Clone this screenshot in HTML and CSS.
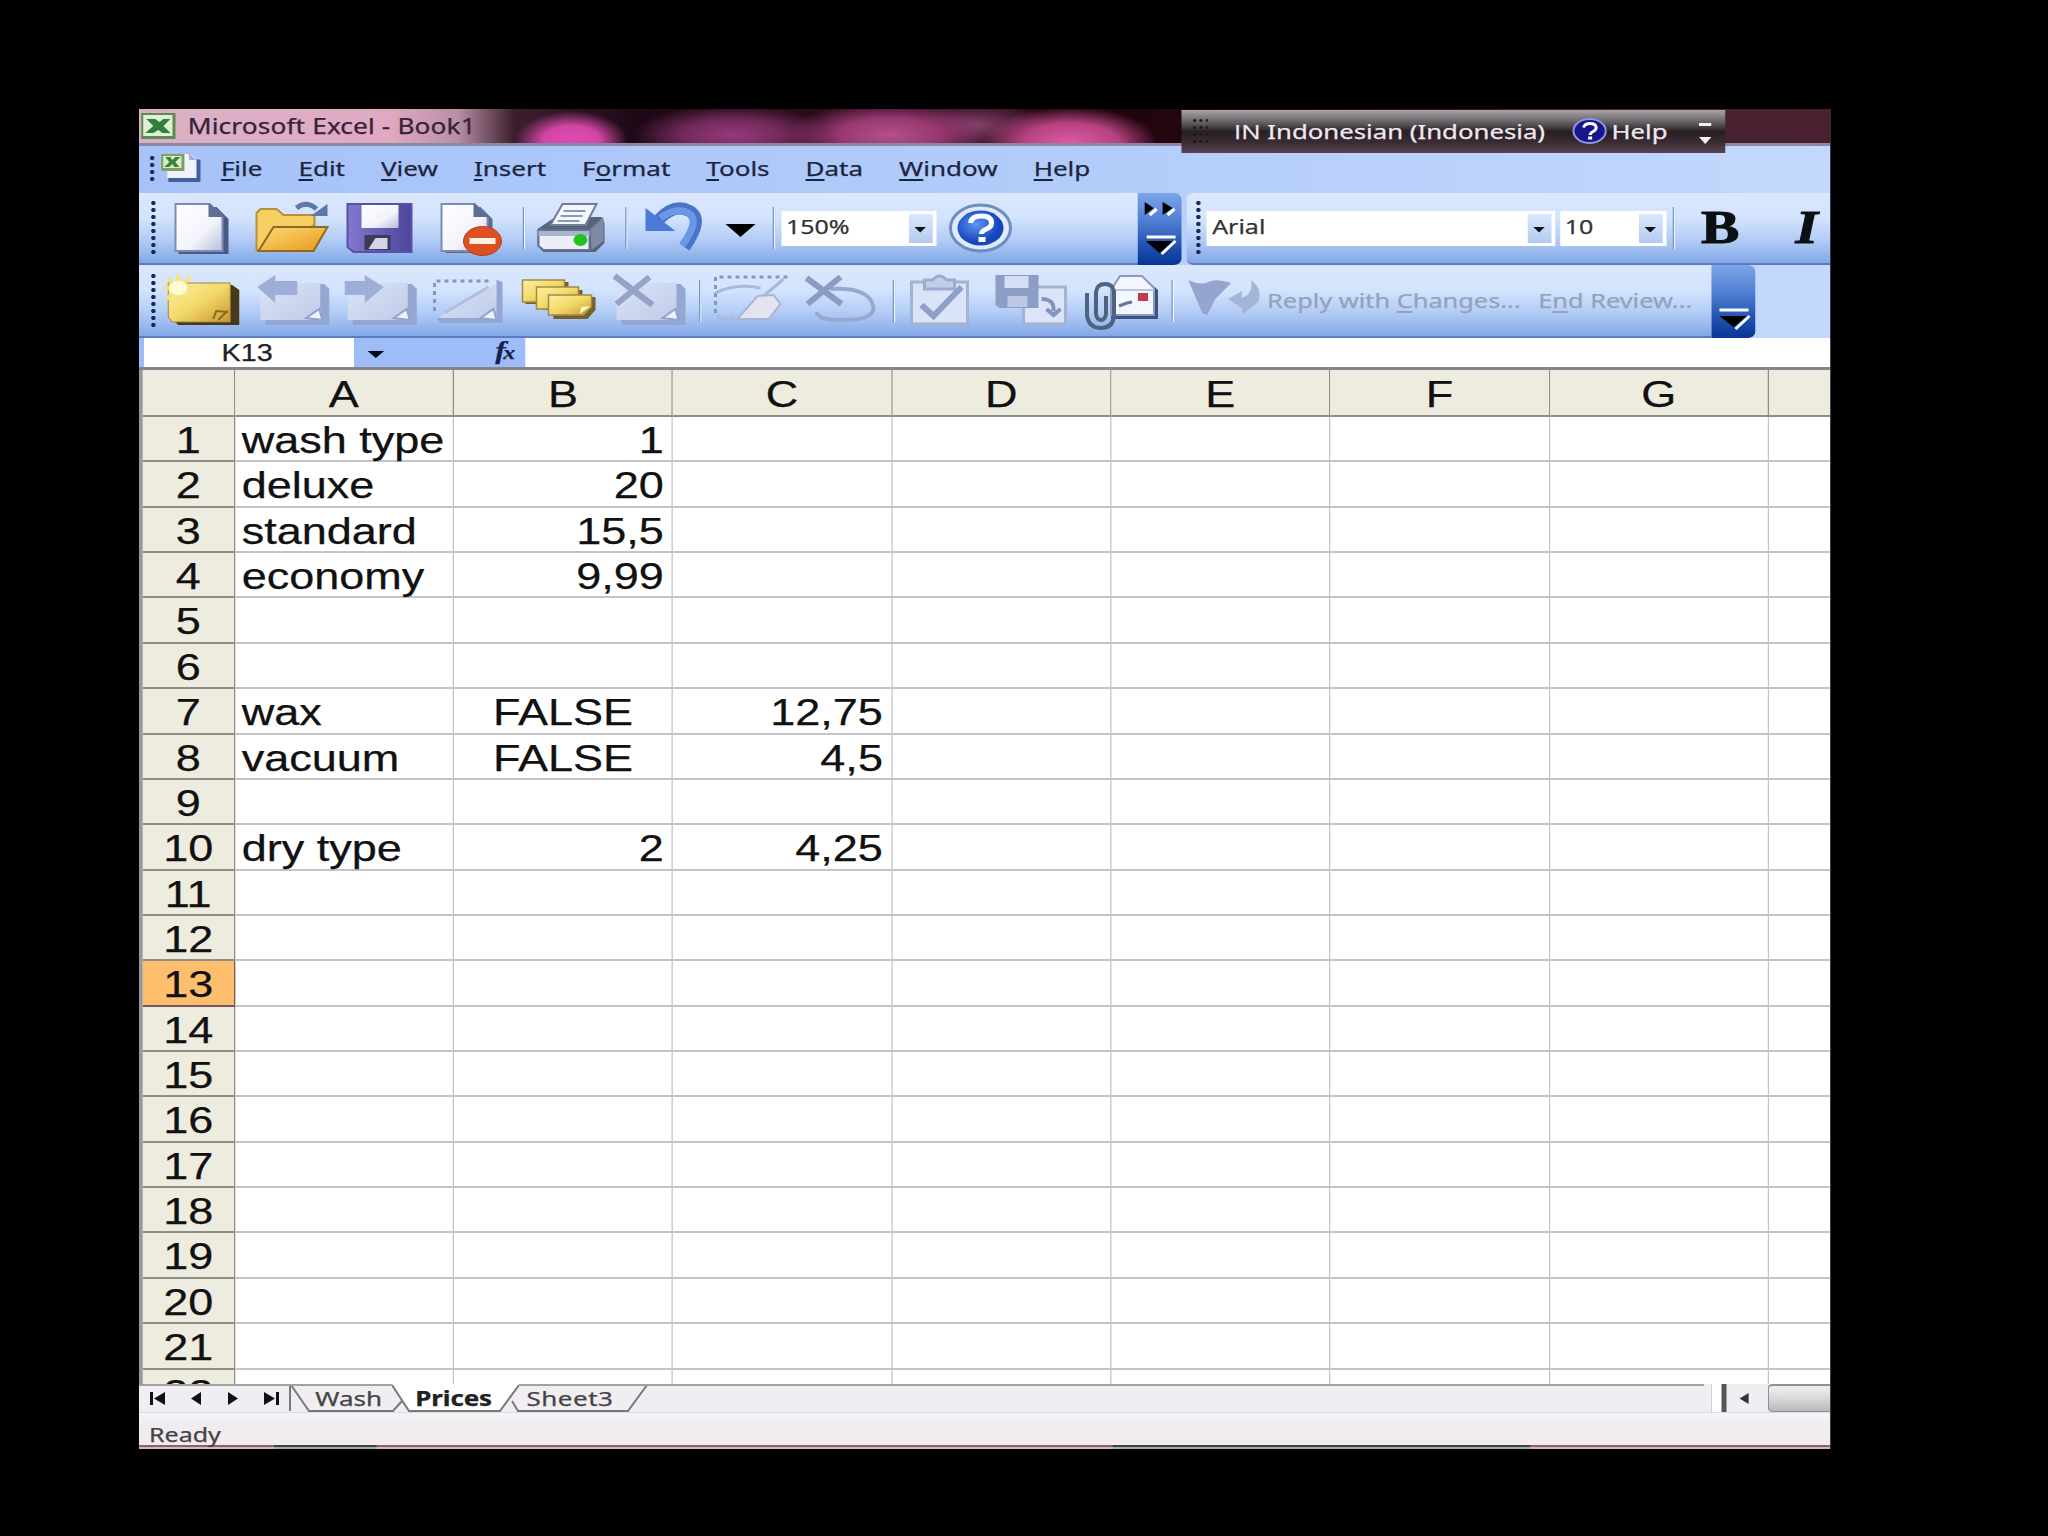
FILE: index.html
```
<!DOCTYPE html>
<html lang="en">
<head>
    <meta charset="UTF-8">
    <title>Microsoft Excel - Book1</title>
    <link rel="stylesheet" href="styles.css">
</head>
<body>
    <svg width="0" height="0" class="defs">
        <defs>
            <linearGradient id="paper" x1="0" y1="0" x2="1" y2="1">
                <stop offset="0" stop-color="#fff"/><stop offset=".6" stop-color="#f3f4fc"/><stop offset="1" stop-color="#b4bedc"/>
            </linearGradient>
            <linearGradient id="gold" x1="0" y1="0" x2="1" y2="1">
                <stop offset="0" stop-color="#fdf0a0"/><stop offset=".5" stop-color="#f3d96a"/><stop offset="1" stop-color="#c9962c"/>
            </linearGradient>
            <linearGradient id="orange" x1="0" y1="0" x2="1" y2="1">
                <stop offset="0" stop-color="#ffd978"/><stop offset="1" stop-color="#e69a1c"/>
            </linearGradient>
            <linearGradient id="faded" x1="0" y1="0" x2="1" y2="1">
                <stop offset="0" stop-color="#dbe3f6"/><stop offset="1" stop-color="#bfcbe8"/>
            </linearGradient>
            <linearGradient id="disk" x1="0" y1="0" x2="1" y2="0">
                <stop offset="0" stop-color="#8279cf"/><stop offset="1" stop-color="#4d459c"/>
            </linearGradient>
            <radialGradient id="ball" cx=".4" cy=".4">
                <stop offset="0" stop-color="#5c96f2"/><stop offset="1" stop-color="#1546bd"/>
            </radialGradient>
        </defs>
    </svg>
    <div class="window">
        <div class="titlebar">
            <svg class="app-icon" width="29" height="28" viewBox="0 0 36 28" preserveAspectRatio="none">
                <rect x="1" y="1" width="34" height="26" fill="#5f8a55"/>
                <rect x="3" y="3" width="29" height="21" fill="#dff0d6"/>
                <path d="M6 7h9l4 3 4-3h7l-7 7 7 7h-8l-4-3-5 3H5l8-7z" fill="#2f7f3d"/>
            </svg>
            <span>Microsoft Excel - Book1</span>
        </div>
        <div class="langbar">
            <div class="lang-grip"></div>
            <span class="lang-name"><b>IN</b> Indonesian (Indonesia)</span>
            <svg width="29" height="26" viewBox="0 0 36 26" preserveAspectRatio="none">
                <ellipse cx="18" cy="13" rx="16" ry="12" fill="#15158c" stroke="#8f97e0" stroke-width="2"/>
                <path d="M12 9.500q1-4 6.500-4t6 4q0 2.500-3 4t-3 3.500" fill="none" stroke="#fff" stroke-width="3"/>
                <rect x="16.500" y="18.500" width="4" height="3" fill="#fff"/>
            </svg>
            <span class="lang-help">Help</span>
            <svg class="lang-more" width="10" height="24" viewBox="0 0 12 24" preserveAspectRatio="none">
                <path d="M0 2h12v3H0zM0 16h12l-6 7z" fill="#f4f0f4"/>
            </svg>
        </div>
        <div class="menubar">
            <div class="grip menu-grip"></div>
            <svg class="book-icon" width="33" height="32" viewBox="0 0 41 32" preserveAspectRatio="none">
                <path d="M8 6h24l8 2v22H8z" fill="#44609c"/>
                <path d="M7 2h23l6 5v19H7z" fill="#eef2ff"/>
                <path d="M28 1l8 7h-7z" fill="#9fb0d4"/>
                <rect x="1" y="2" width="23" height="17" fill="#7fa05e"/>
                <rect x="3" y="4" width="18" height="12" fill="#dcecc8"/>
                <path d="M5 5h5l2 3 3-3h5l-5 5 4 5h-5l-2-3-3 3H4l5-5z" fill="#39863d"/>
            </svg>
            <nav>
                <span><u>F</u>ile</span>
                <span><u>E</u>dit</span>
                <span><u>V</u>iew</span>
                <span><u>I</u>nsert</span>
                <span>F<u>o</u>rmat</span>
                <span><u>T</u>ools</span>
                <span><u>D</u>ata</span>
                <span><u>W</u>indow</span>
                <span><u>H</u>elp</span>
            </nav>
        </div>

        <div class="bars">
            <div class="toolbar standard">
                <div class="grip"></div>
                <!-- new -->
                <svg width="64" height="71" viewBox="0 0 80 71" preserveAspectRatio="none">
                    <path d="M12 14h38l12 12v35H12z" fill="#4a5a86"/>
                    <path d="M9 11h34l13 12v35H9z" fill="url(#paper)" stroke="#7d8bb2" stroke-width="2"/>
                    <path d="M42 10v14h17z" fill="#5e6f96"/>
                </svg>
                <!-- open -->
                <svg width="76" height="71" viewBox="0 0 95 71" preserveAspectRatio="none">
                    <path d="M10 57V20l4-4h16l7 6h31v10L22 57z" fill="#f6cf62" stroke="#b3913f" stroke-width="2"/>
                    <path d="M12 58L27 34h54L67 58z" fill="url(#orange)" stroke="#8d6a22" stroke-width="2"/>
                    <path d="M50 15q10-8 20 1" fill="none" stroke="#5d79a6" stroke-width="5"/>
                    <path d="M64 23h17V11z" fill="#5d79a6"/>
                </svg>
                <!-- save -->
                <svg width="72" height="71" viewBox="0 0 90 71" preserveAspectRatio="none">
                    <path d="M6 11h64v48H12l-6-5z" fill="url(#disk)" stroke="#5950ab" stroke-width="2"/>
                    <rect x="20" y="12" width="37" height="23" fill="url(#paper)"/>
                    <rect x="23" y="42" width="26" height="15" fill="#3c3a55"/>
                    <path d="M34 45h12v11H27z" fill="#d5d4e4"/>
                </svg>
                <!-- permission -->
                <svg width="68" height="71" viewBox="0 0 85 71" preserveAspectRatio="none">
                    <path d="M14 14h35l12 12v34H14z" fill="#5c6c90"/>
                    <path d="M10 11h33l13 12v35H10z" fill="url(#paper)" stroke="#7d8bb2" stroke-width="2"/>
                    <path d="M42 10v14h17z" fill="#5e6f96"/>
                    <ellipse cx="51" cy="48" rx="19" ry="14.500" fill="#de4f22" stroke="#b3401f"/>
                    <rect x="38" y="45" width="26" height="6" fill="#fff3e0"/>
                </svg>
                <i class="sep"></i>
                <!-- print -->
                <svg width="68" height="71" viewBox="0 0 85 71" preserveAspectRatio="none">
                    <path d="M6 36l18-12h46l3 6v20L64 59H12l-6-6z" fill="#56647c"/>
                    <path d="M19 32l12-21h34L54 32z" fill="#f5f7ff" stroke="#707c98" stroke-width="2"/>
                    <path d="M32 18h22M29 23h22M26 28h22" stroke="#8d98b4" stroke-width="2"/>
                    <path d="M7 37h51v20H12l-5-4z" fill="#eceff9" stroke="#66728d" stroke-width="2"/>
                    <path d="M7 38h51v5H7z" fill="#aab4cd"/>
                    <path d="M59 36l13-12v24L60 57z" fill="#7d8aa4"/>
                    <ellipse cx="49" cy="47" rx="7" ry="6" fill="#1fc41d"/>
                </svg>
                <i class="sep wide"></i>
                <!-- undo -->
                <svg width="64" height="71" viewBox="0 0 80 71" preserveAspectRatio="none">
                    <path d="M22 27Q38 10 53 18T48 54" fill="none" stroke="#4a73cb" stroke-width="12"/>
                    <path d="M24 25Q40 13 52 20T46 52" fill="none" stroke="#6c97e6" stroke-width="7"/>
                    <path d="M9 15v23h30z" fill="#4b7bd6"/>
                </svg>
                <svg width="40" height="71" viewBox="0 0 50 71" preserveAspectRatio="none">
                    <path d="M9 31h30L24 44z" fill="#000"/>
                </svg>
                <i class="sep"></i>
                <div class="combo zoom"><span>150%</span><em></em></div>
                <!-- help -->
                <svg width="68" height="71" viewBox="0 0 85 71" preserveAspectRatio="none">
                    <ellipse cx="44" cy="35" rx="30" ry="23" fill="#dfeafc" stroke="#6d8cc0" stroke-width="3"/>
                    <ellipse cx="44" cy="35" rx="23" ry="17.500" fill="url(#ball)"/>
                    <path d="M34 30q1-7 11-7t10 7q0 4-5 6t-5 5" fill="none" stroke="#fff" stroke-width="5"/>
                    <rect x="42" y="44" width="7" height="5" fill="#fff"/>
                </svg>
            </div>
            <div class="overflow">
                <svg width="35" height="71" viewBox="0 0 44 71" preserveAspectRatio="none">
                    <path d="M12 22l7-6M30 22l7-6M9 44h29M24 61l14-13" stroke="#fff" stroke-width="3"/>
                    <path d="M7 9v13l9-7zM25 9v13l10-7zM8 48h27L22 60z" fill="#000"/>
                </svg>
            </div>
            <div class="toolbar formatting">
                <div class="grip"></div>
                <div class="combo font"><span>Arial</span><em></em></div>
                <div class="combo size"><span>10</span><em></em></div>
                <i class="sep"></i>
                <strong class="bold">B</strong>
                <strong class="italic">I</strong>
            </div>
        </div>

        <div class="bars second">
            <div class="toolbar reviewing">
                <div class="grip"></div>
                <!-- new comment -->
                <svg width="72" height="72" viewBox="0 0 90 72" preserveAspectRatio="none">
                    <path d="M12 20h60l7 5v35H18l-6-6z" fill="#46391c"/>
                    <path d="M8 18h62v39H12l-4-5z" fill="url(#gold)" stroke="#9c8440"/>
                    <path d="M53 54l3-8 12 1M58 55l9-9" fill="none" stroke="#8d6a22" stroke-width="2"/>
                    <path d="M18 9v30M4 23h30M7 13l23 21M30 12L7 34" stroke="#f4e283" stroke-width="4"/>
                    <ellipse cx="18" cy="23" rx="9" ry="7" fill="#fffbd0"/>
                </svg>
                <!-- previous comment -->
                <svg width="70.4" height="72" viewBox="0 0 88 72" preserveAspectRatio="none">
                    <path d="M14 19h60l5 5v36H15z" fill="#94a6d2"/>
                    <path d="M10 18h60v37H10z" fill="url(#faded)"/>
                    <path d="M56 53l13-9 3 11z" fill="#eef3ff" stroke="#91a2cc" stroke-width="2"/>
                    <path d="M7 22l18-12v6h22v14H25v8z" fill="#9dafd6"/>
                </svg>
                <!-- next comment -->
                <svg width="70.4" height="72" viewBox="0 0 88 72" preserveAspectRatio="none">
                    <path d="M14 19h60l5 5v36H15z" fill="#94a6d2"/>
                    <path d="M10 18h60v37H10z" fill="url(#faded)"/>
                    <path d="M56 53l13-9 3 11z" fill="#eef3ff" stroke="#91a2cc" stroke-width="2"/>
                    <path d="M46 22L27 10v6H7v14h20v8z" fill="#9dafd6"/>
                </svg>
                <!-- show comment -->
                <svg width="68.800" height="72" viewBox="0 0 86 72" preserveAspectRatio="none">
                    <path d="M14 58h62V17l-6-2v38H10z" fill="#94a6d2"/>
                    <path d="M12 52L69 19v34H16z" fill="url(#faded)"/>
                    <path d="M8 46V16h54" fill="none" stroke="#8497c2" stroke-width="3" stroke-dasharray="4 4"/>
                    <path d="M18 48L62 22" stroke="#b2bedb" stroke-width="3"/>
                    <path d="M54 53l13-9 3 11z" fill="#eef3ff" stroke="#91a2cc" stroke-width="2"/>
                </svg>
                <!-- show all comments -->
                <svg width="75.200" height="72" viewBox="0 0 94 72" preserveAspectRatio="none">
                    <g fill="#73602f">
                        <path d="M13 17h44v22H14zM29 25h42v20H31z"/><path d="M40 32h44v13l-8 9H42z"/>
                    </g>
                    <g fill="url(#gold)" stroke="#a28a45" stroke-width="1.500">
                        <path d="M11 15h42v22H11z"/><path d="M25 22h42v22H25z"/><path d="M37 30h43v12l-8 8H37z"/>
                    </g>
                    <path d="M68 49l2-7 9-1z" fill="#fff9c8"/>
                </svg>
                <!-- delete comment -->
                <svg width="70.4" height="72" viewBox="0 0 88 72" preserveAspectRatio="none">
                    <path d="M14 19h60l5 5v36H15z" fill="#94a6d2"/>
                    <path d="M10 18h60v37H10z" fill="url(#faded)"/>
                    <path d="M56 53l13-9 3 11z" fill="#eef3ff" stroke="#91a2cc" stroke-width="2"/>
                    <path d="M8 11l38 29M43 12L10 39" stroke="#94a3c6" stroke-width="6"/>
                </svg>
                <i class="sep"></i>
                <!-- show ink -->
                <svg width="72" height="72" viewBox="0 0 90 72" preserveAspectRatio="none">
                    <path d="M9 48V12h72" fill="none" stroke="#8497c2" stroke-width="3" stroke-dasharray="4 4"/>
                    <path d="M9 28q20-10 45-5M77 14L56 32M11 50q6 7 16 3" fill="none" stroke="#a9b9dc" stroke-width="3"/>
                    <path d="M31 54l20-23 16-1 7 9-12 15z" fill="#e4e4f0" stroke="#a9b5d5" stroke-width="2"/>
                </svg>
                <!-- delete ink -->
                <svg width="72.800" height="72" viewBox="0 0 91 72" preserveAspectRatio="none">
                    <path d="M34 24q42-2 43 20-2 12-35 11-20 0-22-8" fill="none" stroke="#97a9d0" stroke-width="4"/>
                    <path d="M10 13l35 26M44 12L11 39" stroke="#8b9cc4" stroke-width="6"/>
                </svg>
                <i class="sep"></i>
                <!-- task -->
                <svg width="64" height="72" viewBox="0 0 80 72" preserveAspectRatio="none">
                    <path d="M10 17h56v42H10z" fill="#dae3f8" stroke="#a5b3d3" stroke-width="3"/>
                    <path d="M23 15h8q7-8 14 0h8v9H23z" fill="#c2cde7" stroke="#9dacd0" stroke-width="3"/>
                    <path d="M20 40l12 11 28-29" fill="none" stroke="#8fa0c8" stroke-width="6"/>
                </svg>
                <!-- update file -->
                <svg width="78.400" height="72" viewBox="0 0 98 72" preserveAspectRatio="none">
                    <path d="M42 22h42v37H42z" fill="#dbe4f8" stroke="#a5b3d3" stroke-width="3"/>
                    <path d="M14 10h43v33H18l-4-3z" fill="#8c9dc6"/>
                    <path d="M23 11h24v12H23z" fill="#d5def4"/><path d="M26 31h20v11H26z" fill="#bcc8e6"/>
                    <path d="M60 34q13 0 12 12M65 44l7 6 7-6" fill="none" stroke="#8293be" stroke-width="4"/>
                </svg>
                <!-- mail attachment -->
                <svg width="70.400" height="72" viewBox="0 0 88 72" preserveAspectRatio="none">
                    <path d="M32 26l10-14h22l15 13v29H32z" fill="#3c5282"/>
                    <path d="M32 25l9-14h22l12 12v27H32z" fill="#f3f5ff" stroke="#8c9bbd" stroke-width="2"/>
                    <path d="M32 25h43" stroke="#b8c3de" stroke-width="2"/>
                    <rect x="59" y="28" width="10" height="8" fill="#c23b46"/>
                    <path d="M40 41l8-3 5-1" stroke="#66759c" stroke-width="3"/>
                    <path d="M8 28v23q2 12 14 12t13-12V27q-1-8-9-8t-9 8v22q1 6 5 6t5-6V31" fill="none" stroke="#4d6480" stroke-width="4"/>
                </svg>
                <i class="sep"></i>
                <svg width="68.800" height="72" viewBox="0 0 86 72" preserveAspectRatio="none">
                    <path d="M8 15q12 6 20 2t23 1L35 34l-8 16-5-2z" fill="#94a6cf"/>
                    <path d="M71 15q12 10 7 22L63 49l-2-6-13-9 14-8-1 7q12-3 10-18z" fill="#a5b5da"/>
                </svg>
                <span class="review-text">Reply with <u>C</u>hanges...</span>
                <span class="review-text">E<u>n</u>d Review...</span>
            </div>
            <div class="overflow">
                <svg width="34.400" height="72" viewBox="0 0 43 72" preserveAspectRatio="none">
                    <path d="M8 45h29M24 64l14-13" stroke="#fff" stroke-width="3"/>
                    <path d="M8 51h27L22 62z" fill="#000"/>
                </svg>
            </div>
        </div>

        <div class="formula-bar">
            <div class="name-box">K13</div>
            <svg width="15" height="28" viewBox="0 0 18 28" preserveAspectRatio="none"><path d="M1 13h16l-8 7z" fill="#000820"/></svg>
            <div class="fx">f<small>x</small></div>
            <div class="formula"></div>
        </div>

        <div class="sheet" id="sheet"></div>

        <div class="tabs">
            <svg class="tab-lines" width="1252" height="28" viewBox="0 0 1565 28" preserveAspectRatio="none">
                <path d="M253 0L270 27H361L380 0z" fill="#fff"/>
                <g fill="none" stroke="#77777c" stroke-width="2">
                    <path d="M151 0v27M152 1L170 27H254L263 17M373 17L379 27H489L508 1"/>
                    <path d="M253 1L270 27H361L380 1"/>
                </g>
                <path d="M0 1H253M380 1H1565" stroke="#a2a2a6" stroke-width="2"/>
            </svg>
            <svg class="tab-nav" width="112" height="28" viewBox="0 0 140 28" preserveAspectRatio="none">
                <path d="M11 8h3v13h-3zM26 8v13l-11-6.500zM62 8v13l-10-6.500zM89 8v13l10-6.500zM125 8v13l11-6.500zM137 8h3v13h-3z" fill="#111"/>
            </svg>
            <span class="tab wash">Wash</span>
            <span class="tab prices">Prices</span>
            <span class="tab sheet3">Sheet3</span>
            <div class="splitter"></div>
            <svg class="scroll-left" width="33" height="28" viewBox="0 0 41 28" preserveAspectRatio="none"><path d="M22 9v11l-9-5.500z" fill="#333"/></svg>
            <div class="thumb"></div>
        </div>
        <div class="status">Ready</div>
        <div class="taskbar"><i></i><b></b></div>
    </div>
    <script src="script.js"></script>
</body>
</html>
```
FILE: styles.css
```
        body {
            margin: 0;
            background-color: #000;
            overflow: hidden;
            font-family: 'Noto Sans', sans-serif;
            font-size: 20px;
            color: #1c2440;
        }
        .defs {
            position: absolute;
        }
        /* screen is shown wide, so everything is stretched sideways */
        .window {
            position: relative;
            width: 1352.8px;
            height: 1340px;
            margin: 109px 0 0 139px;
            transform: scaleX(1.25);
            transform-origin: 0 0;
            overflow: hidden;
            background-color: #9ebdf8;
            -webkit-text-stroke: 0.25px;
        }
        svg {
            display: block;
            flex: none;
        }
        .titlebar {
            box-sizing: border-box;
            height: 37px;
            display: flex;
            align-items: center;
            gap: 9px;
            padding-bottom: 1px;
            border-bottom: 3px solid #8c87a4;
            color: #36233a;
            font-size: 21px;
            letter-spacing: 0.1px;
            background:
                radial-gradient(ellipse 45px 30px at 346px 32px, #e04bb4 0, #d246a5 50%, transparent 100%),
                radial-gradient(ellipse 70px 36px at 745px 34px, #df5aa6 0, #b5427f 55%, transparent 100%),
                radial-gradient(ellipse 80px 34px at 600px 26px, #b4508a 0, #97386f 50%, transparent 100%),
                radial-gradient(ellipse 80px 30px at 475px 26px, #96387b 0, #722a5a 50%, transparent 100%),
                radial-gradient(ellipse 60px 26px at 670px 16px, #83406a 0, transparent 100%),
                linear-gradient(90deg, #d6b0c4 0, #dfaec4 110px, #e0a9c1 200px, #b98fa3 255px, #3c1f2e 300px, #1e0815 400px, #2a0b1c 520px, #22040f 800px, #25060f 850px, #4a2333 1200px, #48202f 100%);
        }
        .app-icon {
            margin-left: 1px;
        }
        .langbar {
            position: absolute;
            top: 1px;
            left: 834px;
            width: 435px;
            height: 43px;
            display: flex;
            align-items: center;
            font-size: 20.600px;
            color: #f0e8f0;
            background: linear-gradient(#a9a5a8 0, #625c60 30%, #272023 50%, #3a2b33 75%, #5a4452 100%);
        }
        .lang-grip {
            width: 13px;
            height: 30px;
            margin: 0 21px 0 8px;
            background-image: radial-gradient(circle, #1c161a 1px, transparent 1.6px);
            background-size: 5px 7px;
        }
        .lang-name {
            width: 255px;
            white-space: nowrap;
        }
        .lang-name b {
            font-family: 'Open Sans', sans-serif;
            font-weight: normal;
        }
        .lang-name,
        .lang-help {
            position: relative;
            top: -1px;
        }
        .lang-name + svg {
            margin: -1px 3px 0 15px;
        }
        .lang-more {
            margin-left: 25px;
            margin-top: 2px;
        }
        .menubar {
            height: 47px;
            display: flex;
            align-items: center;
            background: linear-gradient(90deg, #a6c2f8, #b4cdfa 60%, #c3d8fc);
        }
        .grip {
            width: 5px;
            height: 56px;
            margin: 0 8px 0 8.500px;
            flex: none;
            background: radial-gradient(ellipse 2px 2.500px at 2.500px 3px, #17295c 70%, transparent 100%) 0 0 / 5px 7px;
        }
        .menu-grip {
            height: 28px;
            margin: -2px 4px 0 8px;
        }
        .book-icon {
            margin-top: -3px;
        }
        nav {
            display: flex;
            gap: 28.800px;
            margin: -3px 0 0 15.500px;
            font-size: 20.800px;
        }
        u {
            text-decoration-thickness: 2px;
            text-underline-offset: 3px;
            text-decoration-skip-ink: none;
        }
        .bars {
            height: 72px;
            display: flex;
            background-color: #b8d0f9;
        }
        .second {
            height: 73px;
            background-color: #c2d8fc;
        }
        .toolbar {
            box-sizing: border-box;
            display: flex;
            align-items: center;
            border-bottom: 2px solid #5b7cc0;
            background: linear-gradient(#dbe7fd 0, #d3e4fd 35%, #b5cef6 65%, #82a8e8 100%);
            overflow: hidden;
        }
        .standard {
            width: 799px;
        }
        .formatting {
            flex: 1;
            margin-left: 4px;
            border-radius: 6px 0 0 6px;
        }
        .formatting .grip {
            margin-left: 6.500px;
        }
        .reviewing {
            width: 1258px;
        }
        .reviewing .grip {
            margin-right: 3.300px;
        }
        .sep {
            width: 1px;
            height: 42px;
            margin: 0 5px;
            flex: none;
            border-right: 1px solid #f4f8ff;
            background-color: #7793c8;
        }
        .sep.wide {
            margin: 0 7px;
        }
        .second .sep {
            margin: 0 4.200px;
        }
        .overflow {
            width: 35px;
            background: linear-gradient(#7ea5ea 0, #4e7cd2 40%, #1f4fae 75%, #083596 100%);
            border-radius: 0 6px 6px 0;
        }
        .combo {
            box-sizing: border-box;
            height: 35px;
            display: flex;
            justify-content: space-between;
            align-items: center;
            padding: 0 3px 0 4px;
            background-color: #fff;
            color: #333;
        }
        .combo span {
            margin-top: -4px;
        }
        .combo em {
            width: 19px;
            height: 29px;
            background: linear-gradient(#dbe8fc, #b2cbf2);
        }
        .combo em::after {
            content: '';
            display: block;
            margin: 13px auto 0;
            width: 10px;
            height: 6px;
            background-color: #111;
            clip-path: polygon(0 0, 100% 0, 50% 100%);
        }
        .zoom {
            width: 124px;
        }
        .font {
            width: 279px;
            margin-left: -4px;
            padding-left: 5px;
        }
        .size {
            width: 85px;
            margin: 0 0 0 4px;
        }
        .bold,
        .italic {
            font-family: 'Liberation Serif', serif;
            font-size: 46px;
            line-height: 60px;
            color: #0b1012;
            -webkit-text-stroke: 1px #0b1012;
        }
        .bold {
            margin: 0 0 0 16px;
        }
        .italic {
            margin-left: 45px;
            font-style: italic;
        }
        .review-text {
            margin: -2px 13px 0 1px;
            white-space: nowrap;
            font-size: 20.300px;
            color: #93a2bd;
        }
        .formula-bar {
            height: 29px;
            display: flex;
            border-bottom: 3px solid #85858a;
            background-color: #9ebdf8;
        }
        .name-box {
            width: 168px;
            margin: 0 10px 0 4px;
            line-height: 31px;
            text-align: center;
            font-family: 'Liberation Sans', sans-serif;
            font-size: 23px;
            text-indent: -3px;
            background-color: #fff;
            color: #222;
        }
        .fx {
            width: 24px;
            margin-left: 88px;
            font: italic bold 25px/26px 'Liberation Serif', serif;
            color: #14224c;
        }
        .fx small {
            font-size: 19px;
            margin-left: -2px;
        }
        .formula {
            flex: 1;
            background-color: #fff;
        }

        .sheet {
            height: 1014px;
            overflow: hidden;
            border-left: 3px solid #97979c;
            background-color: #fff;
            font-family: 'Liberation Sans', sans-serif;
            font-size: 36px;
            color: #111;
        }
        .row {
            display: grid;
            grid-template-columns: 73.700px repeat(8, 175.320px);
            grid-template-rows: 100%;
            height: 45.360px;
            line-height: 44px;
            width: 1480px;
        }
        .row > div {
            box-sizing: border-box;
            border-right: 1.600px solid #c5c2c9;
            border-bottom: 2px solid #c5c2c9;
            white-space: nowrap;
            padding: 2px 5.500px 0;
        }
        .row.head {
            height: 47px;
            line-height: 45px;
        }
        .row .num,
        .row.head > div {
            background-color: #eeebdf;
            border-color: #8f8d86;
            text-align: center;
        }
        .row .num.active {
            background-color: #fdbe6d;
            border-color: #7a5360;
        }
        .row .right {
            padding-right: 6.500px;
            text-align: right;
        }
        .row .center {
            text-align: center;
        }

        .tabs {
            position: relative;
            height: 28px;
            display: flex;
            background-color: #f0eef2;
            font-size: 20.800px;
            color: #444;
            line-height: 26px;
        }
        .tab-lines {
            position: absolute;
            left: 0;
            top: 0;
        }
        .tab {
            position: relative;
            top: 1px;
        }
        .wash {
            width: 54px;
            margin-left: 29px;
        }
        .prices {
            width: 64px;
            margin-left: 26px;
            font-weight: bold;
            color: #222;
            letter-spacing: -0.1px;
        }
        .sheet3 {
            width: 74px;
            margin-left: 25px;
            letter-spacing: 0.4px;
        }
        .splitter {
            width: 4px;
            margin-left: auto;
            border-left: 8px solid #fff;
            background-color: #55555a;
        }
        .thumb {
            box-sizing: border-box;
            width: 50px;
            border: 1px solid #8f8f94;
            border-right: 0;
            border-top-width: 2px;
            border-radius: 4px 0 0 4px;
            background: linear-gradient(#efeff1, #dcdcde 45%, #b9b9bc);
        }
        .status {
            box-sizing: border-box;
            height: 33px;
            padding-left: 8px;
            border-top: 1px solid #dedce0;
            line-height: 43px;
            color: #444;
            background: linear-gradient(#f5f4f7, #efecf0 40%, #f3ecf1);
        }
        .taskbar {
            display: flex;
            height: 4px;
            background: linear-gradient(#866373 50%, #d6b3c1 50%);
        }
        .taskbar i,
        .taskbar b {
            width: 82px;
            margin-left: 108px;
            background: linear-gradient(#3b4442 50%, #a5aba9 50%);
        }
        .taskbar b {
            width: 334px;
            margin-left: 589px;
        }
```
FILE: script.js
```
const columns = ['A', 'B', 'C', 'D', 'E', 'F', 'G', ''];

const cells = {
    A1: 'wash type', B1: '1',
    A2: 'deluxe', B2: '20',
    A3: 'standard', B3: '15,5',
    A4: 'economy', B4: '9,99',
    A7: 'wax', B7: 'FALSE', C7: '12,75',
    A8: 'vacuum', B8: 'FALSE', C8: '4,5',
    A10: 'dry type', B10: '2', C10: '4,25'
};

const sheet = document.getElementById('sheet');

function addDiv(parent, className, text) {
    const div = document.createElement('div');
    div.className = className;
    div.textContent = text || '';
    parent.appendChild(div);
    return div;
}

const head = addDiv(sheet, 'row head');
addDiv(head, 'num');
columns.forEach(name => addDiv(head, '', name));

for (let i = 1; i <= 22; i++) {
    const row = addDiv(sheet, 'row');
    addDiv(row, i === 13 ? 'num active' : 'num', i);
    columns.forEach(name => {
        const value = cells[name + i];
        let align = '';
        if (value === 'FALSE') {
            align = 'center';
        } else if (/^\d/.test(value || '')) {
            align = 'right';
        }
        addDiv(row, align, value);
    });
}
```
